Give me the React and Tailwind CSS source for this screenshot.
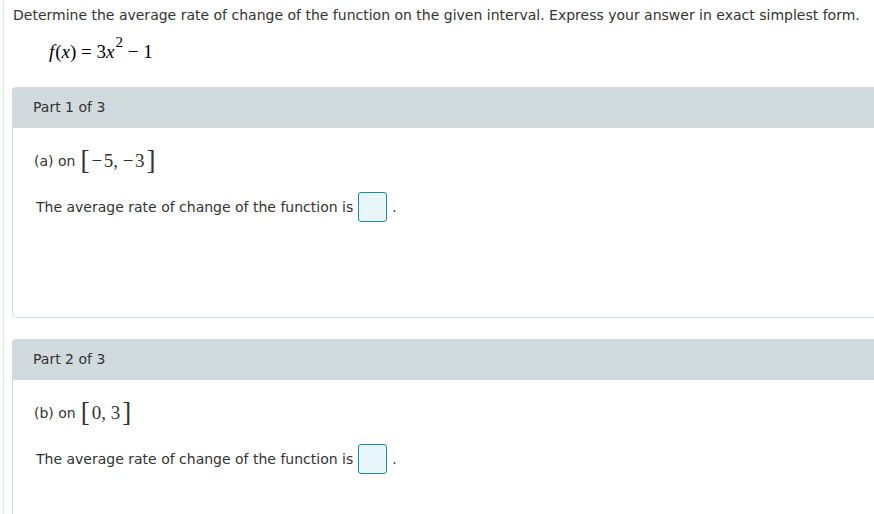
export default function App() {
  return (
    <div className="w-[874px] h-[514px] overflow-hidden bg-white text-[#333333] font-['DejaVu_Sans',Verdana,sans-serif]">
      <div className="ml-[3px] h-full border-l border-[#dde5e8] pl-[8px]">
        <p className="pt-[6px] pl-px text-[14px] leading-[18px]">
          Determine the average rate of change of the function on the given interval. Express your answer in exact simplest form.
        </p>

        <div className="pl-[37px] pt-[14px] h-[63px] font-['Liberation_Serif',serif] text-[19px] text-black">
          <i className="mr-px">f</i>(<i>x</i>) = 3<i>x</i>
          <sup className="text-[15px] ml-px -top-[11px]">2</sup> − 1
        </div>

        <Part label="Part 1 of 3" letter="(a)" interval={"−\u200a5, −\u200a3"} />

        <div className="h-[21px]" />

        <Part label="Part 2 of 3" letter="(b)" interval="0, 3" />
      </div>
    </div>
  );
}

function Part({ label, letter, interval }) {
  return (
    <div className="mr-[-12px]">
      <div className="h-[41px] bg-[#d1dadd] rounded-tl-[4px] flex items-center pl-[21px] text-[14px]">
        {label}
      </div>
      <div className="h-[190px] border-l border-b border-[#d1dadd] rounded-bl-[5px] pl-[21px]">
        <div className="pt-[18px] flex items-center text-[14px] h-[48px]">
          <span>{letter} on</span>
          <span className="ml-[5px] font-['Liberation_Serif',serif] text-[19px] flex items-center">
            <span className="text-[27px] leading-none font-light -mt-[2px]">[</span>
            <span className="px-[2px] whitespace-pre">{interval}</span>
            <span className="text-[27px] leading-none font-light -mt-[2px]">]</span>
          </span>
        </div>
        <div className="mt-[16px] flex items-center text-[14px] pl-[2px]">
          <span>The average rate of change of the function is</span>
          <span className="ml-[5px] w-[29px] h-[30px] rounded-[3px] border border-[#1b8a9c] bg-[#e8f5f9] inline-block" />
          <span className="ml-[5px]">.</span>
        </div>
      </div>
    </div>
  );
}
